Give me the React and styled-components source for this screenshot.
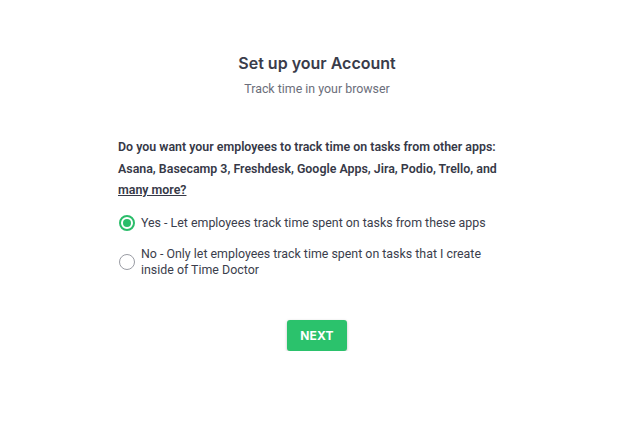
import React, { useState } from "react"
import styled, { createGlobalStyle } from "styled-components"

const GlobalStyle = createGlobalStyle`
  body {
    margin: 0;
    background: #fff;
    font-family: Roboto, "Liberation Sans", sans-serif;
    color: #3b3e4c;
  }
`

const Page = styled.div`
  width: 634px;
  padding-top: 52px;
  display: flex;
  flex-direction: column;
  align-items: center;
`

const Title = styled.h1`
  margin: 0;
  font-family: Inter, Roboto, sans-serif;
  font-size: 16px;
  font-weight: 600;
  line-height: 22px;
  color: #3a3c4a;
`

const Subtitle = styled.p`
  margin: 7px 0 0;
  font-size: 12.4px;
  line-height: 16px;
  color: #6b6e7a;
`

const Body = styled.div`
  width: 398px;
  margin-top: 39px;
`

const Question = styled.p`
  margin: 0;
  font-size: 12.4px;
  font-weight: 600;
  line-height: 21.5px;
  color: #363947;

  a {
    color: inherit;
    text-decoration: underline;
  }
`

const Options = styled.div`
  margin-top: 14px;
  display: flex;
  flex-direction: column;
  gap: 15px;
`

const Option = styled.label`
  display: flex;
  align-items: center;
  gap: 6px;
  padding-left: 1px;
  font-size: 12.4px;
  line-height: 16px;
  color: #3b3e4c;
  cursor: pointer;
`

const Radio = styled.span`
  flex: none;
  width: 16px;
  height: 16px;
  box-sizing: border-box;
  border-radius: 50%;
  border: ${p => (p.$checked ? "2px solid #2bbd6a" : "1.5px solid #9a9ca4")};
  display: flex;
  align-items: center;
  justify-content: center;

  &::after {
    content: "";
    width: 8px;
    height: 8px;
    border-radius: 50%;
    background: #2bbd6a;
    display: ${p => (p.$checked ? "block" : "none")};
  }
`

const OptionText = styled.span`
  max-width: 360px;
`

const Footer = styled.div`
  margin-top: 42px;
  display: flex;
  justify-content: center;
`

const NextButton = styled.button`
  width: 60px;
  height: 31px;
  border: none;
  border-radius: 3px;
  background: #2bc26c;
  color: #fff;
  font-family: Inter, Roboto, sans-serif;
  font-size: 12px;
  font-weight: 700;
  letter-spacing: 0.2px;
  box-shadow: 0 1px 3px rgba(0, 0, 0, 0.25);
  cursor: pointer;
`

const options = [
  { id: "yes", label: "Yes - Let employees track time spent on tasks from these apps" },
  { id: "no", label: "No - Only let employees track time spent on tasks that I create inside of Time Doctor" }
]

const App = () => {
  const [choice, setChoice] = useState("yes")

  return (
    <Page>
      <GlobalStyle />
      <Title>Set up your Account</Title>
      <Subtitle>Track time in your browser</Subtitle>
      <Body>
        <Question>
          Do you want your employees to track time on tasks from other apps:
          Asana, Basecamp 3, Freshdesk, Google Apps, Jira, Podio, Trello, and{" "}
          <a href="#">many more?</a>
        </Question>
        <Options>
          {options.map(o => (
            <Option key={o.id} onClick={() => setChoice(o.id)}>
              <Radio $checked={choice === o.id} />
              <OptionText>{o.label}</OptionText>
            </Option>
          ))}
        </Options>
        <Footer>
          <NextButton>NEXT</NextButton>
        </Footer>
      </Body>
    </Page>
  )
}

export default App
